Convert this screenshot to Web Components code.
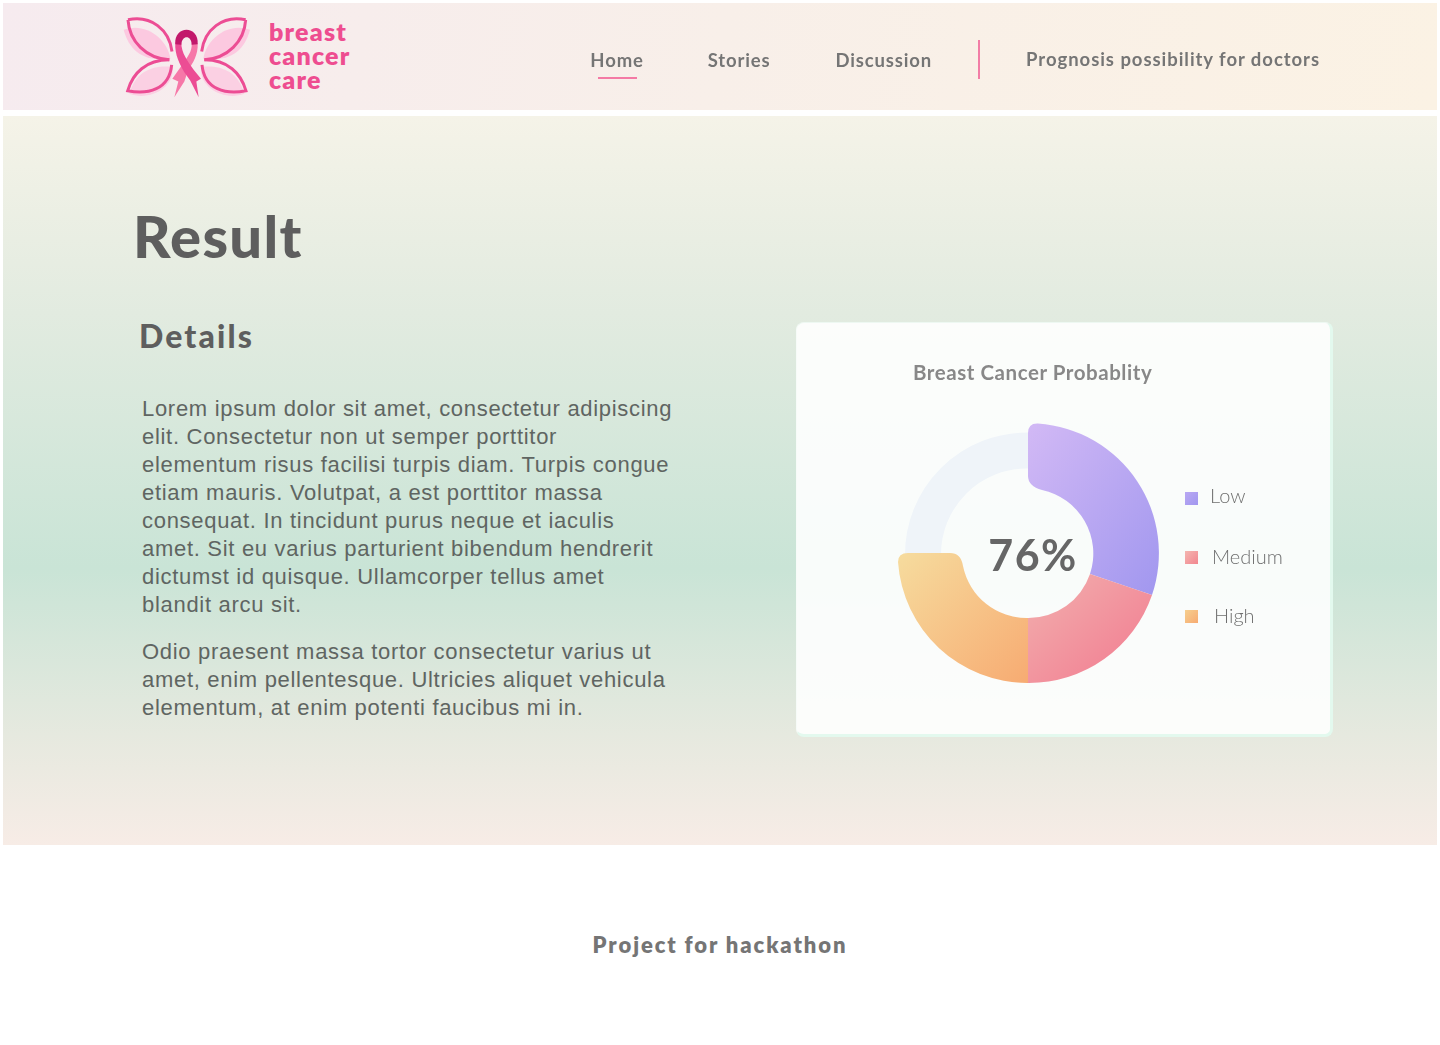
<!DOCTYPE html>
<html lang="en">
<head>
<meta charset="utf-8">
<title>Breast cancer care</title>
<style>
  html, body { margin: 0; padding: 0; background: #fff; }
  body { padding: 3px 3px 0; font-family: Lato, "Liberation Sans", sans-serif; height: 1042px; box-sizing: border-box; overflow: hidden; }
</style>
</head>
<body>
<app-header></app-header>
<result-panel>
  <span slot="title">Result</span>
  <span slot="subtitle">Details</span>
  <p>Lorem ipsum dolor sit amet, consectetur adipiscing elit. Consectetur non ut semper porttitor elementum risus facilisi turpis diam. Turpis congue etiam mauris. Volutpat, a est porttitor massa consequat. In tincidunt purus neque et iaculis amet. Sit eu varius parturient bibendum hendrerit dictumst id quisque. Ullamcorper tellus amet blandit arcu sit.</p>
  <p>Odio praesent massa tortor consectetur varius ut amet, enim pellentesque. Ultricies aliquet vehicula elementum, at enim potenti faucibus mi in.</p>
  <donut-card slot="chart"></donut-card>
</result-panel>
<app-footer>Project for hackathon</app-footer>

<script>
class BrandLogo extends HTMLElement {
  constructor() {
    super();
    const root = this.attachShadow({ mode: "open" });
    root.innerHTML = `
      <style>
        :host { display: flex; align-items: center; gap: 18px; margin-top: -1px; }
        svg { width: 130px; height: 87px; display: block; margin: 0 0 0 2px; filter: blur(.3px); }
        .name { margin-top: -2px; font: 800 25px/24px Lato, sans-serif; color: #ee4d90; letter-spacing: 1.2px; }
      </style>
      <svg viewBox="60 35 390 260">
        <g id="wing">
          <path d="M68 85 C130 60 200 110 208 172 C130 182 85 150 68 85Z" fill="#fcc9e0"/>
          <path d="M85 277 C105 205 160 190 215 196 C222 255 150 300 85 277Z" fill="#fbd0e3"/>
          <path d="M81 55 C150 40 205 85 213 150 M81 55 C85 120 135 170 205 175" fill="none" stroke="#ec4d94" stroke-width="9"/>
          <path d="M205 175 C135 175 95 215 80 268 C140 280 205 265 212 190" fill="none" stroke="#ec4d94" stroke-width="9"/>
        </g>
        <use href="#wing" transform="matrix(-1 0 0 1 515 0)"/>
        <path d="M290 125 C292 160 275 185 262 205 L250 240 L220 287 L232 240 L214 232 L240 195 C260 165 274 150 272 125Z" fill="#f678a8"/>
        <path d="M223 122 C220 160 238 190 250 212 L268 238 L293 287 L286 240 L300 232 L278 205 C262 180 240 155 241 122Z" fill="#ec4d94"/>
        <path d="M223 128 C218 70 295 70 290 128 L272 130 C272 100 242 100 241 130Z" fill="#c2186b"/>
      </svg>
      <div class="name">breast<br>cancer<br>care</div>`;
  }
}

class NavLink extends HTMLElement {
  constructor() {
    super();
    const root = this.attachShadow({ mode: "open" });
    root.innerHTML = `
      <style>
        :host { display: block; position: relative; font: 700 18.5px/24px Lato, sans-serif; color: #757575; letter-spacing: .85px; white-space: nowrap; filter: blur(.3px); }
        :host([active])::after { content: ""; position: absolute; left: 8px; right: 7px; bottom: -7px; height: 2px; background: #f47aa5; }
      </style>
      <slot></slot>`;
  }
}

class AppHeader extends HTMLElement {
  constructor() {
    super();
    const root = this.attachShadow({ mode: "open" });
    root.innerHTML = `
      <style>
        :host { display: flex; box-sizing: border-box; height: 107px; padding: 0 117px 0 116px; background: linear-gradient(100deg, #f6ebef, #f8efe9 50%, #fbf2e4); }
        nav { margin: 4px 0 0 auto; display: flex; align-items: center; height: 105px; }
        .home { margin-right: 64px; }
        .stories { margin-right: 65px; }
        .rule { width: 2px; height: 39px; background: #f27da6; margin: 0 46px; }
        .doctors { margin-top: -2px; letter-spacing: .95px; }
      </style>
      <brand-logo></brand-logo>
      <nav>
        <nav-link class="home" active>Home</nav-link>
        <nav-link class="stories">Stories</nav-link>
        <nav-link>Discussion</nav-link>
        <div class="rule"></div>
        <nav-link class="doctors">Prognosis possibility for doctors</nav-link>
      </nav>`;
  }
}

class ResultPanel extends HTMLElement {
  constructor() {
    super();
    const root = this.attachShadow({ mode: "open" });
    root.innerHTML = `
      <style>
        :host { display: block; box-sizing: border-box; height: 729px; margin-top: 6px; padding: 86px 104px 0 130px; color: #5e5e5e;
          background: linear-gradient(180deg, #f5f3e8 0%, #e2ebe0 27%, #c9e4d6 62%, #e6e9df 85%, #f7ece6 100%); }
        h1 { margin: 0; font: 900 58px/68px Lato, sans-serif; letter-spacing: 1.3px; }
        .cols { display: flex; justify-content: space-between; margin-top: 48px; }
        .text { width: 540px; margin-left: 6px; }
        h2 { margin: 0 0 41px; font: 900 32px/36px Lato, sans-serif; letter-spacing: 2.1px; }
        .copy { width: 533px; margin-left: 3px; font: 400 22px/28px "Liberation Sans", Arial, sans-serif; letter-spacing: .7px; color: #5f6562; }
        ::slotted(p) { margin: 0 0 19px; }
      </style>
      <h1><slot name="title"></slot></h1>
      <div class="cols">
        <div class="text">
          <h2><slot name="subtitle"></slot></h2>
          <div class="copy"><slot></slot></div>
        </div>
        <slot name="chart"></slot>
      </div>`;
  }
}

class DonutCard extends HTMLElement {
  constructor() {
    super();
    const root = this.attachShadow({ mode: "open" });
    root.innerHTML = `
      <style>
        :host { display: block; box-sizing: border-box; width: 537px; height: 415px; margin-top: 4px; padding: 36px 0 0 99px;
          background: rgba(255,255,255,.88); border-radius: 8px; border: solid; border-color: #eef8f2 #e3f9ee #e3f9ee #f6fbf8; border-width: 1px 3px 3px 1px; color: #6f6f6f; filter: blur(.35px); }
        .title { margin-left: 17px; font: 700 20.5px/26px Lato, sans-serif; color: #888; letter-spacing: .55px; }
        .body { display: flex; margin-top: 36px; }
        .donut { position: relative; width: 264px; height: 264px; flex: none; }
        svg { display: block; }
        .value { position: absolute; left: 10px; right: 0; top: 104px; text-align: center; font: 700 43px/60px Lato, sans-serif; color: #666; letter-spacing: 1.5px; }
        ul { list-style: none; margin: 65px 0 0 25px; padding: 0; display: flex; flex-direction: column; gap: 35px; font: 300 20px/24px Lato, sans-serif; }
        li { display: flex; align-items: center; height: 24px; }
        i { width: 13px; height: 13px; margin-right: 12px; }
        span { display: block; }
      </style>
      <div class="title">Breast Cancer Probablity</div>
      <div class="body">
        <div class="donut">
          <svg width="264" height="264" viewBox="896 421 264 264">
            <defs>
              <linearGradient id="p" x1="0" y1="0" x2="1" y2="1"><stop offset="0" stop-color="#d2b9f5"/><stop offset="1" stop-color="#a197ef"/></linearGradient>
              <linearGradient id="r" x1="0" y1="0" x2="1" y2="1"><stop offset="0" stop-color="#f2b0ae"/><stop offset="1" stop-color="#f2798f"/></linearGradient>
              <linearGradient id="o" x1="0" y1="0" x2="1" y2="1"><stop offset="0" stop-color="#f6dc9e"/><stop offset="1" stop-color="#f7ab72"/></linearGradient>
            </defs>
            <circle cx="1027" cy="554.5" r="104" fill="none" stroke="#eff4f9" stroke-width="36"/>
            <path d="M1028 433 Q1028 423 1038 423.5 A130 130 0 0 1 1152 595 L1090 574 A65 65 0 0 0 1042 490 Q1028 486 1028 476Z" fill="url(#p)"/>
            <path d="M1152 595 A130 130 0 0 1 1028 683 L1028 618 A65 65 0 0 0 1090 574Z" fill="url(#r)"/>
            <path d="M1028 683 A130 130 0 0 1 898 562 Q898 553 908 553 L950 553 Q961 553 963 566 A65 65 0 0 0 1028 618Z" fill="url(#o)"/>
          </svg>
          <div class="value">76%</div>
        </div>
        <ul>
          <li><i style="background:linear-gradient(135deg,#b9a8f3,#a197ef)"></i><span style="margin-top:-6px">Low</span></li>
          <li><i style="background:linear-gradient(135deg,#f4b6b0,#f2868f)"></i><span style="margin:-2px 0 0 2px">Medium</span></li>
          <li><i style="background:linear-gradient(135deg,#f6cf8e,#f7ab72)"></i><span style="margin:-2px 0 0 4px">High</span></li>
        </ul>
      </div>`;
  }
}

class AppFooter extends HTMLElement {
  constructor() {
    super();
    const root = this.attachShadow({ mode: "open" });
    root.innerHTML = `
      <style>
        :host { display: block; padding-top: 86px; text-align: center; font: 800 22px/28px Lato, sans-serif; color: #757575; letter-spacing: 1.9px; }
      </style>
      <slot></slot>`;
  }
}

customElements.define("brand-logo", BrandLogo);
customElements.define("nav-link", NavLink);
customElements.define("app-header", AppHeader);
customElements.define("result-panel", ResultPanel);
customElements.define("donut-card", DonutCard);
customElements.define("app-footer", AppFooter);
</script>
</body>
</html>
